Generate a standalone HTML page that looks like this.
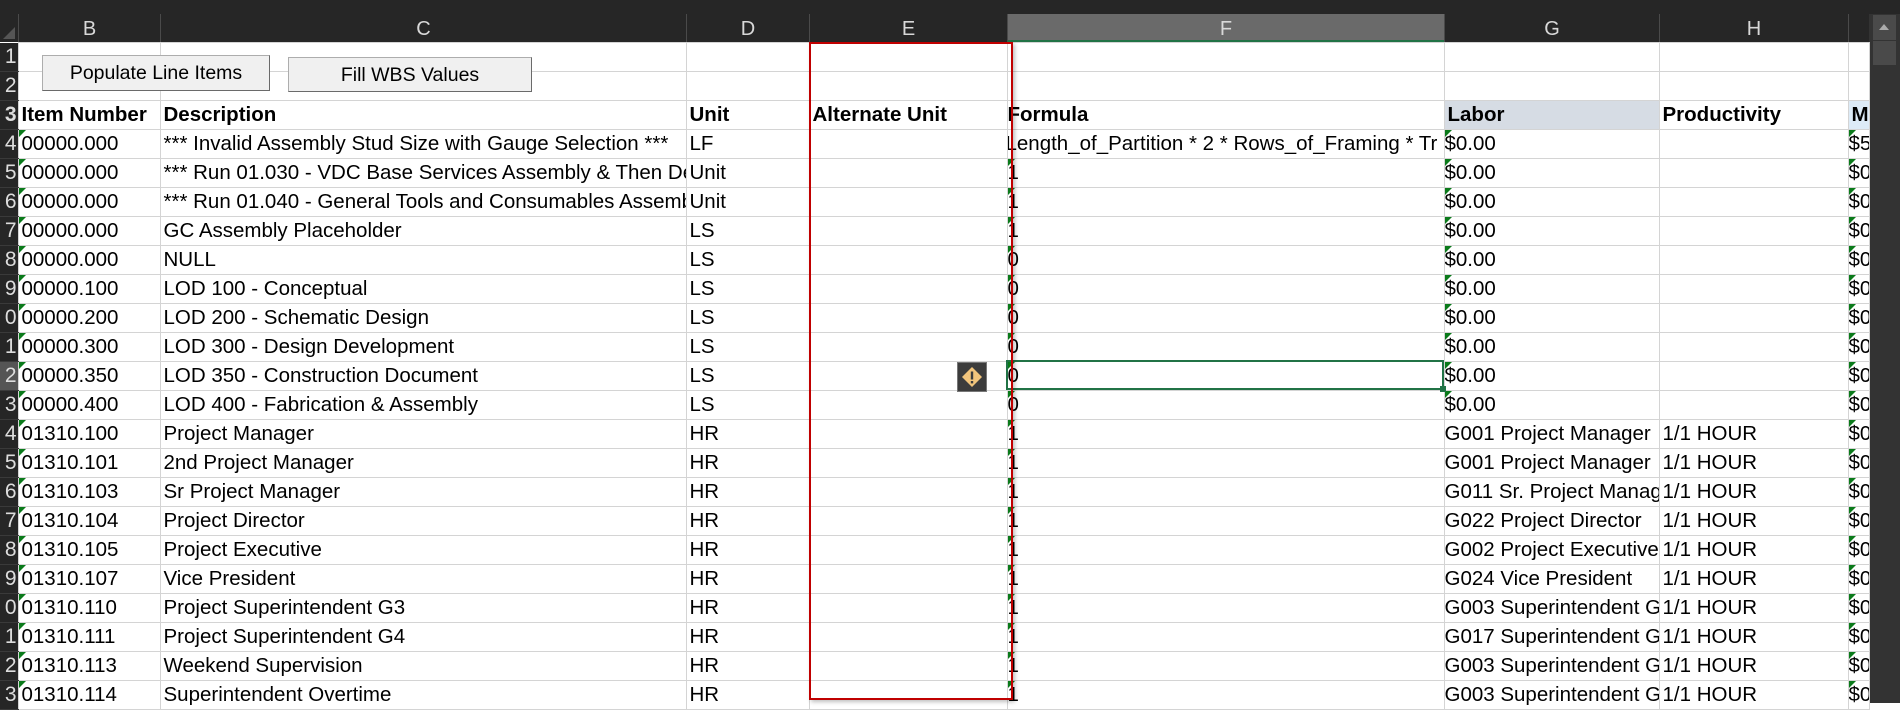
<!DOCTYPE html><html><head><meta charset="utf-8"><style>
body{margin:0;width:1900px;height:703px;overflow:hidden;background:#fff;font-family:"Liberation Sans",sans-serif;position:relative}
#hdr{position:absolute;left:0;top:0;width:1900px;height:42px;background:#262626}
.ch{position:absolute;top:14px;height:28px;border-left:1px solid #4a4a4a;color:#d8d8d8;font-size:20px;text-align:center;line-height:30px;box-sizing:border-box}
table{position:absolute;left:0;top:42px;border-collapse:collapse;table-layout:fixed;width:1869px}
td{height:28px;border:1px solid #d4d4d4;padding:0 0 0 3px;font-size:20.5px;white-space:nowrap;overflow:hidden;color:#000;position:relative;line-height:28px;box-sizing:border-box}
td.r{background:#262626;color:#ddd;border:none;border-bottom:1px solid #3a3a3a;text-align:right;padding:0 1px 0 0;font-size:21px}
td.t::before{content:"";position:absolute;left:0;top:0;border-top:7px solid #0a7a1a;border-right:7px solid transparent}
tr.h td{font-weight:bold}
.btn{position:absolute;background:#f0f0f0;border:1px solid #adadad;border-right-color:#6a6a6a;border-bottom-color:#6a6a6a;font-size:19.5px;text-align:center;box-sizing:border-box}
</style></head><body>
<div id="hdr">
<div style="position:absolute;left:0;top:14px;width:18px;height:28px;"><div style="position:absolute;right:3px;bottom:3px;border-bottom:12px solid #555;border-left:12px solid transparent"></div></div>
<div class="ch" style="left:18px;width:142px">B</div>
<div class="ch" style="left:160px;width:526px">C</div>
<div class="ch" style="left:686px;width:123px">D</div>
<div class="ch" style="left:809px;width:198px">E</div>
<div class="ch" style="left:1007px;width:437px;background:#6a6a6a;border-bottom:2px solid #217346">F</div>
<div class="ch" style="left:1444px;width:215px">G</div>
<div class="ch" style="left:1659px;width:189px">H</div>
<div class="ch" style="left:1848px;width:21px"></div>
</div>
<div style="position:absolute;left:1869px;top:14px;width:31px;height:689px;background:#333"></div>
<div style="position:absolute;left:1873px;top:15px;width:23px;height:25px;background:#4a4a4a"><div style="position:absolute;left:6px;top:9px;border-bottom:6px solid #aaa;border-left:5px solid transparent;border-right:5px solid transparent"></div></div>
<div style="position:absolute;left:1873px;top:41px;width:23px;height:24px;background:#4a4a4a"></div>
<table>
<colgroup><col style="width:18px"><col style="width:142px"><col style="width:526px"><col style="width:123px"><col style="width:198px"><col style="width:437px"><col style="width:215px"><col style="width:189px"><col style="width:21px"></colgroup>
<tr><td class="r">1</td><td></td><td></td><td></td><td></td><td></td><td></td><td></td><td></td></tr>
<tr><td class="r">2</td><td></td><td></td><td></td><td></td><td></td><td></td><td></td><td></td></tr>
<tr class="h"><td class="r">3</td><td>Item Number</td><td>Description</td><td>Unit</td><td>Alternate Unit</td><td style="padding:0">Formula</td><td style="background:#d6dce4">Labor</td><td>Productivity</td><td style="background:#ddebf7">M</td></tr>
<tr><td class="r">4</td><td class="t">00000.000</td><td>*** Invalid Assembly Stud Size with Gauge Selection ***</td><td>LF</td><td></td><td style="padding:0;text-indent:-2px">Length_of_Partition * 2 * Rows_of_Framing * Tr</td><td class="t" style="padding:0">$0.00</td><td></td><td class="t" style="padding:0">$5</td></tr>
<tr><td class="r">5</td><td class="t">00000.000</td><td>*** Run 01.030 - VDC Base Services Assembly &amp; Then Delete</td><td>Unit</td><td></td><td class="t" style="padding:0">1</td><td class="t" style="padding:0">$0.00</td><td></td><td class="t" style="padding:0">$0</td></tr>
<tr><td class="r">6</td><td class="t">00000.000</td><td>*** Run 01.040 - General Tools and Consumables Assembly</td><td>Unit</td><td></td><td class="t" style="padding:0">1</td><td class="t" style="padding:0">$0.00</td><td></td><td class="t" style="padding:0">$0</td></tr>
<tr><td class="r">7</td><td class="t">00000.000</td><td>GC Assembly Placeholder</td><td>LS</td><td></td><td class="t" style="padding:0">1</td><td class="t" style="padding:0">$0.00</td><td></td><td class="t" style="padding:0">$0</td></tr>
<tr><td class="r">8</td><td class="t">00000.000</td><td>NULL</td><td>LS</td><td></td><td class="t" style="padding:0">0</td><td class="t" style="padding:0">$0.00</td><td></td><td class="t" style="padding:0">$0</td></tr>
<tr><td class="r">9</td><td class="t">00000.100</td><td>LOD 100 - Conceptual</td><td>LS</td><td></td><td class="t" style="padding:0">0</td><td class="t" style="padding:0">$0.00</td><td></td><td class="t" style="padding:0">$0</td></tr>
<tr><td class="r">0</td><td class="t">00000.200</td><td>LOD 200 - Schematic Design</td><td>LS</td><td></td><td class="t" style="padding:0">0</td><td class="t" style="padding:0">$0.00</td><td></td><td class="t" style="padding:0">$0</td></tr>
<tr><td class="r">1</td><td class="t">00000.300</td><td>LOD 300 - Design Development</td><td>LS</td><td></td><td class="t" style="padding:0">0</td><td class="t" style="padding:0">$0.00</td><td></td><td class="t" style="padding:0">$0</td></tr>
<tr><td class="r" style="background:#555">2</td><td class="t">00000.350</td><td>LOD 350 - Construction Document</td><td>LS</td><td></td><td class="t" style="padding:0">0</td><td class="t" style="padding:0">$0.00</td><td></td><td class="t" style="padding:0">$0</td></tr>
<tr><td class="r">3</td><td class="t">00000.400</td><td>LOD 400 - Fabrication &amp; Assembly</td><td>LS</td><td></td><td class="t" style="padding:0">0</td><td class="t" style="padding:0">$0.00</td><td></td><td class="t" style="padding:0">$0</td></tr>
<tr><td class="r">4</td><td class="t">01310.100</td><td>Project Manager</td><td>HR</td><td></td><td class="t" style="padding:0">1</td><td style="padding:0">G001 Project Manager</td><td>1/1 HOUR</td><td class="t" style="padding:0">$0</td></tr>
<tr><td class="r">5</td><td class="t">01310.101</td><td>2nd Project Manager</td><td>HR</td><td></td><td class="t" style="padding:0">1</td><td style="padding:0">G001 Project Manager</td><td>1/1 HOUR</td><td class="t" style="padding:0">$0</td></tr>
<tr><td class="r">6</td><td class="t">01310.103</td><td>Sr Project Manager</td><td>HR</td><td></td><td class="t" style="padding:0">1</td><td style="padding:0">G011 Sr. Project Manager</td><td>1/1 HOUR</td><td class="t" style="padding:0">$0</td></tr>
<tr><td class="r">7</td><td class="t">01310.104</td><td>Project Director</td><td>HR</td><td></td><td class="t" style="padding:0">1</td><td style="padding:0">G022 Project Director</td><td>1/1 HOUR</td><td class="t" style="padding:0">$0</td></tr>
<tr><td class="r">8</td><td class="t">01310.105</td><td>Project Executive</td><td>HR</td><td></td><td class="t" style="padding:0">1</td><td style="padding:0">G002 Project Executive</td><td>1/1 HOUR</td><td class="t" style="padding:0">$0</td></tr>
<tr><td class="r">9</td><td class="t">01310.107</td><td>Vice President</td><td>HR</td><td></td><td class="t" style="padding:0">1</td><td style="padding:0">G024 Vice President</td><td>1/1 HOUR</td><td class="t" style="padding:0">$0</td></tr>
<tr><td class="r">0</td><td class="t">01310.110</td><td>Project Superintendent G3</td><td>HR</td><td></td><td class="t" style="padding:0">1</td><td style="padding:0">G003 Superintendent G3</td><td>1/1 HOUR</td><td class="t" style="padding:0">$0</td></tr>
<tr><td class="r">1</td><td class="t">01310.111</td><td>Project Superintendent G4</td><td>HR</td><td></td><td class="t" style="padding:0">1</td><td style="padding:0">G017 Superintendent G4</td><td>1/1 HOUR</td><td class="t" style="padding:0">$0</td></tr>
<tr><td class="r">2</td><td class="t">01310.113</td><td>Weekend Supervision</td><td>HR</td><td></td><td class="t" style="padding:0">1</td><td style="padding:0">G003 Superintendent G3</td><td>1/1 HOUR</td><td class="t" style="padding:0">$0</td></tr>
<tr><td class="r">3</td><td class="t">01310.114</td><td>Superintendent Overtime</td><td>HR</td><td></td><td class="t" style="padding:0">1</td><td style="padding:0">G003 Superintendent G3</td><td>1/1 HOUR</td><td class="t" style="padding:0">$0</td></tr>
</table>
<div class="btn" style="left:42px;top:55px;width:228px;height:36px;line-height:34px">Populate Line Items</div>
<div class="btn" style="left:288px;top:57px;width:244px;height:35px;line-height:35px">Fill WBS Values</div>
<div style="position:absolute;left:1006px;top:360px;width:438px;height:30px;border:2px solid #217346;box-sizing:border-box"></div>
<div style="position:absolute;left:1440px;top:386px;width:6px;height:6px;background:#217346"></div>
<div style="position:absolute;left:809px;top:42px;width:204px;height:658px;border:2px solid #c00000;box-sizing:border-box;box-shadow:2px 2px 4px rgba(0,0,0,.25)"></div>
<div style="position:absolute;left:957px;top:362px;width:30px;height:30px;background:#3c3c3c;border:1px solid #777;box-sizing:border-box">
<svg width="28" height="28" viewBox="0 0 28 28"><path d="M14 4 L24 14 L14 24 L4 14 Z" fill="#f2c57c"/><rect x="12.8" y="8.5" width="2.4" height="8" fill="#3c3c3c"/><rect x="12.8" y="18" width="2.4" height="2.4" fill="#3c3c3c"/></svg></div>
</body></html>
